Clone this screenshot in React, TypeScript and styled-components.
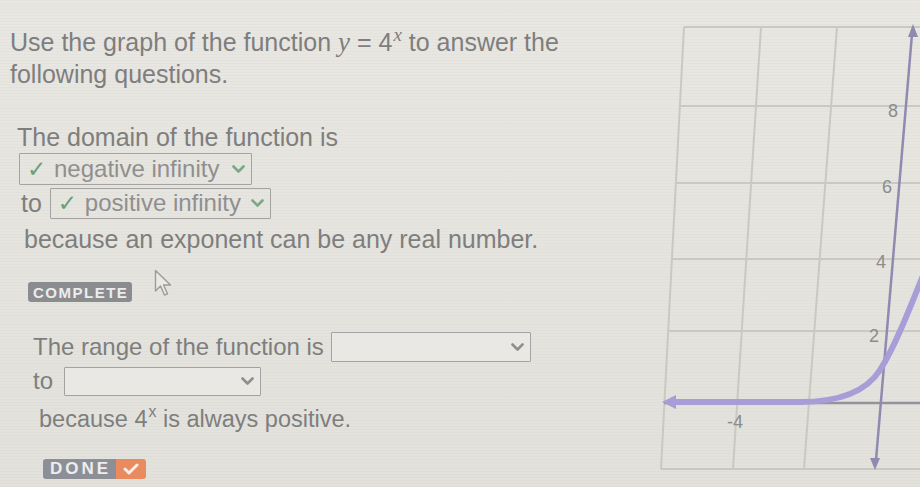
import * as React from 'react';
import styled, { createGlobalStyle } from 'styled-components';

const sans = `'Liberation Sans', Arial, sans-serif`;
const serif = `'Liberation Serif', 'Times New Roman', serif`;

const GlobalStyle = createGlobalStyle`
  html, body {
    margin: 0;
    padding: 0;
    background: #e7e5e0;
  }
`;

const Page = styled.main`
  display: flex;
  width: 920px;
  height: 487px;
  overflow: hidden;
  font-family: ${sans};
  color: #7e7e7e;
  background:
    repeating-linear-gradient(0deg, rgba(0, 0, 0, 0.018) 0 1px, transparent 1px 3px),
    linear-gradient(to bottom, #e9e7e2, #e3e1db);
`;

const Content = styled.section`
  display: flex;
  flex-direction: column;
  width: 600px;
  flex-shrink: 0;
`;

const Intro = styled.p`
  margin: 26px 0 0 10px;
  font-size: 25px;
  line-height: 32px;
`;

const Line = styled.div<{ $indent: number; $top?: number; $size?: number }>`
  display: flex;
  align-items: center;
  margin-top: ${p => p.$top ?? 0}px;
  padding-left: ${p => p.$indent}px;
  font-size: ${p => p.$size ?? 25}px;
  line-height: 32px;
  white-space: nowrap;
`;

const Text = styled.span`
  display: inline-block;
`;

const MathVar = styled.i`
  font-family: ${serif};
  font-size: 27px;
`;

const Sup = styled.span<{ $math?: boolean }>`
  position: relative;
  top: -10px;
  margin-left: 1px;
  font-size: ${p => (p.$math ? '19px' : '16px')};
  font-family: ${p => (p.$math ? serif : sans)};
  font-style: ${p => (p.$math ? 'italic' : 'normal')};
  line-height: 0;
`;

const Select = styled.div<{ $w: number; $h: number; $ml?: number; $filled?: boolean }>`
  display: flex;
  align-items: center;
  box-sizing: border-box;
  width: ${p => p.$w}px;
  height: ${p => p.$h}px;
  margin-left: ${p => p.$ml ?? 0}px;
  padding: 0 6px 0 7px;
  border: 1.5px solid #a4a3a1;
  border-radius: 1px;
  background: ${p => (p.$filled ? 'transparent' : '#eae8e4')};
  color: #8f8f8f;
  font-size: 24px;
  line-height: 1;
`;

const Check = styled.span`
  width: 19px;
  margin-right: 8px;
  color: #6d9e79;
  font-family: 'DejaVu Sans', sans-serif;
  font-weight: 700;
  font-size: 23px;
`;

const Chevron = styled.svg`
  margin-left: auto;
  flex-shrink: 0;
`;

const BadgeRow = styled.div<{ $indent: number; $top: number }>`
  display: flex;
  align-items: flex-start;
  gap: 22px;
  margin-top: ${p => p.$top}px;
  padding-left: ${p => p.$indent}px;
`;

const Badge = styled.span`
  display: inline-flex;
  align-items: center;
  height: 20px;
  margin-top: 13px;
  padding: 0 4px 0 5px;
  border-radius: 3px;
  background: #8b8c90;
  color: #ececec;
  font-size: 15px;
  font-weight: 700;
  letter-spacing: 1.5px;
`;

const Done = styled.span`
  display: inline-flex;
  align-items: stretch;
  height: 20px;
  border-radius: 3px;
  overflow: hidden;
  font-size: 17px;
  font-weight: 700;
  letter-spacing: 3px;
  color: #ededed;
`;

const DoneLabel = styled.span`
  display: flex;
  align-items: center;
  width: 73px;
  padding-left: 7px;
  box-sizing: border-box;
  background: #8d8f97;
`;

const DoneTick = styled.span`
  display: flex;
  align-items: center;
  justify-content: center;
  width: 30px;
  background: #e98b5e;
`;

const Graph = styled.svg`
  flex-shrink: 0;
  display: block;
`;

const ChevronIcon = ({ colour }: { colour: string }) => (
  <Chevron width="13" height="9" viewBox="0 0 13 9">
    <polyline points="1.5,1.5 6.5,6.5 11.5,1.5" fill="none" stroke={colour} strokeWidth="2.6" strokeLinecap="round" strokeLinejoin="round" />
  </Chevron>
);

const Cursor = () => (
  <svg width="19" height="28" viewBox="0 0 19 28">
    <path d="M1.5 1.5 L1.5 22 L6.5 17 L10.5 26 L13.5 24.8 L9.6 16 L16.5 16 Z" fill="#ebe9e4" stroke="#9c9c9c" strokeWidth="1.4" strokeLinejoin="round" />
  </svg>
);

const leftX = (y: number) => 684 - (23 * (y - 27)) / 442;
const rows = [27, 106, 183, 259, 331, 403, 469];
const cols: [number, number][] = [[684, 661], [761, 733], [837, 804]];
const labels = [
  { t: '8', x: 893, y: 117 },
  { t: '6', x: 887, y: 193 },
  { t: '4', x: 881, y: 268 },
  { t: '2', x: 874, y: 342 },
  { t: '-4', x: 735, y: 428 },
];

const GraphView = () => (
  <Graph width="320" height="487" viewBox="600 0 320 487">
    {rows.map(y => (
      <line key={y} x1={leftX(y)} y1={y} x2="920" y2={y} stroke="#cac8c3" strokeWidth="2" />
    ))}
    {cols.map(([top, bottom]) => (
      <line key={top} x1={top} y1="27" x2={bottom} y2="469" stroke="#cac8c3" strokeWidth="2" />
    ))}
    <line x1="664" y1="403" x2="920" y2="403" stroke="#94929c" strokeWidth="2.5" />
    <line x1="912" y1="34" x2="876" y2="460" stroke="#8e8ab0" strokeWidth="2.5" />
    <polygon points="913,24 908,37 918,37" fill="#8e8ab0" />
    <polygon points="875,470 870,458 880,458" fill="#8e8ab0" />
    {labels.map(l => (
      <text key={l.t} x={l.x} y={l.y} textAnchor="middle" fontFamily={sans} fontSize="18" fill="#8c8c8c">
        {l.t}
      </text>
    ))}
    <path
      d="M672 402 L800 402 C840 402 866 392 880 370 C894 348 906 318 926 268"
      fill="none"
      stroke="#a79ed8"
      strokeWidth="6"
      strokeLinecap="round"
    />
    <polygon points="662,402 676,395 676,409" fill="#a79ed8" />
  </Graph>
);

const App = () => (
  <>
    <GlobalStyle />
    <Page>
      <Content>
        <Intro>
          Use the graph of the function <MathVar>y</MathVar> = 4<Sup $math>x</Sup> to answer the
          <br />
          following questions.
        </Intro>

        <Line $indent={17} $top={31}>
          <Text>The domain of the function is</Text>
        </Line>
        <Line $indent={19}>
          <Select $w={233} $h={32} $filled>
            <Check>✓</Check>
            negative infinity
            <ChevronIcon colour="#79a985" />
          </Select>
        </Line>
        <Line $indent={21} $top={2}>
          <Text>to</Text>
          <Select $w={221} $h={31} $ml={8} $filled>
            <Check>✓</Check>
            positive infinity
            <ChevronIcon colour="#79a985" />
          </Select>
        </Line>
        <Line $indent={24} $top={4}>
          <Text>because an exponent can be any real number.</Text>
        </Line>

        <BadgeRow $indent={28} $top={14}>
          <Badge>COMPLETE</Badge>
          <Cursor />
        </BadgeRow>

        <Line $indent={33} $top={29} $size={24}>
          <Text>The range of the function is</Text>
          <Select $w={200} $h={30} $ml={7}>
            <ChevronIcon colour="#8f8f8f" />
          </Select>
        </Line>
        <Line $indent={33} $top={2} $size={24}>
          <Text>to</Text>
          <Select $w={197} $h={29} $ml={11}>
            <ChevronIcon colour="#8f8f8f" />
          </Select>
        </Line>
        <Line $indent={39} $top={6} $size={23.5}>
          <Text>
            because 4<Sup>x</Sup> is always positive.
          </Text>
        </Line>

        <BadgeRow $indent={43} $top={24}>
          <Done>
            <DoneLabel>DONE</DoneLabel>
            <DoneTick>
              <svg width="16" height="12" viewBox="0 0 16 12">
                <polyline points="2,6 6,10 14,2" fill="none" stroke="#f6efe9" strokeWidth="3" strokeLinecap="round" strokeLinejoin="round" />
              </svg>
            </DoneTick>
          </Done>
        </BadgeRow>
      </Content>
      <GraphView />
    </Page>
  </>
);

export default App;
